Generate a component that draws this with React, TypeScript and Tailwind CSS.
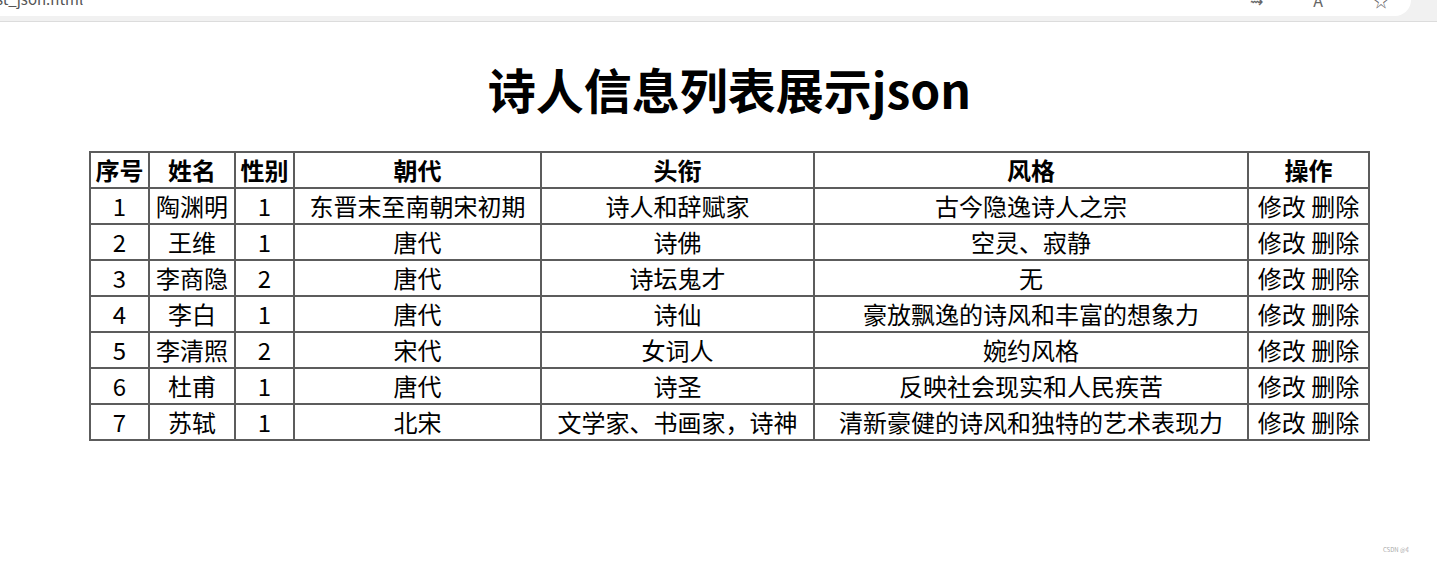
import React from 'react';

interface Poet {
  id: number;
  name: string;
  sex: number;
  dynasty: string;
  title: string;
  style: string;
}

const poets: Poet[] = [
  { id: 1, name: '陶渊明', sex: 1, dynasty: '东晋末至南朝宋初期', title: '诗人和辞赋家', style: '古今隐逸诗人之宗' },
  { id: 2, name: '王维', sex: 1, dynasty: '唐代', title: '诗佛', style: '空灵、寂静' },
  { id: 3, name: '李商隐', sex: 2, dynasty: '唐代', title: '诗坛鬼才', style: '无' },
  { id: 4, name: '李白', sex: 1, dynasty: '唐代', title: '诗仙', style: '豪放飘逸的诗风和丰富的想象力' },
  { id: 5, name: '李清照', sex: 2, dynasty: '宋代', title: '女词人', style: '婉约风格' },
  { id: 6, name: '杜甫', sex: 1, dynasty: '唐代', title: '诗圣', style: '反映社会现实和人民疾苦' },
  { id: 7, name: '苏轼', sex: 1, dynasty: '北宋', title: '文学家、书画家，诗神', style: '清新豪健的诗风和独特的艺术表现力' },
];

const headers = ['序号', '姓名', '性别', '朝代', '头衔', '风格', '操作'];
const widths = [59, 86, 59, 247, 273, 434, 121];

const cell = 'border-2 border-[#5c5c5c] h-[36px] p-0 text-center whitespace-nowrap leading-none';

const App: React.FC = () => {
  return (
    <div
      className="w-[1437px] h-[562px] overflow-hidden bg-white text-black relative"
      style={{ fontFamily: '"Microsoft YaHei", "Noto Sans CJK SC", "Noto Sans", sans-serif' }}
    >
      {/* browser chrome remnant */}
      <div className="bg-[#f1f1f1] h-[22px] border-b border-[#dcdcdc] pr-[26px]">
        <div className="h-[16px] bg-white rounded-br-[16px] overflow-hidden flex justify-between items-start">
          <span className="text-[15px] text-[#555] leading-none -mt-[9px] -ml-[4px]">st_json.html</span>
          <div className="flex gap-[50px] items-start pr-[22px] text-[#666] text-[16px] leading-none -mt-[8px]">
            <span>⇝</span>
            <span>A</span>
            <span>☆</span>
          </div>
        </div>
      </div>

      <div className="pl-[22px]">
        <h1 className="text-center text-[48px] font-bold leading-none mt-[42px] mb-[39px]">诗人信息列表展示json</h1>
        <table className="mx-auto table-fixed border-collapse w-[1279px] text-[24px]">
          <colgroup>
            {widths.map((w, i) => (
              <col key={i} style={{ width: w }} />
            ))}
          </colgroup>
          <thead>
            <tr>
              {headers.map((h) => (
                <th key={h} className={`${cell} font-bold`}>{h}</th>
              ))}
            </tr>
          </thead>
          <tbody>
            {poets.map((p) => (
              <tr key={p.id}>
                <td className={cell}>{p.id}</td>
                <td className={cell}>{p.name}</td>
                <td className={cell}>{p.sex}</td>
                <td className={cell}>{p.dynasty}</td>
                <td className={cell}>{p.title}</td>
                <td className={cell}>{p.style}</td>
                <td className={cell}>
                  <a className="cursor-pointer">修改</a> <a className="cursor-pointer">删除</a>
                </td>
              </tr>
            ))}
          </tbody>
        </table>
      </div>

      <span className="absolute right-[28px] bottom-[9px] text-[6px] text-[#aaa] leading-none">CSDN @¢</span>
    </div>
  );
};

export default App;
